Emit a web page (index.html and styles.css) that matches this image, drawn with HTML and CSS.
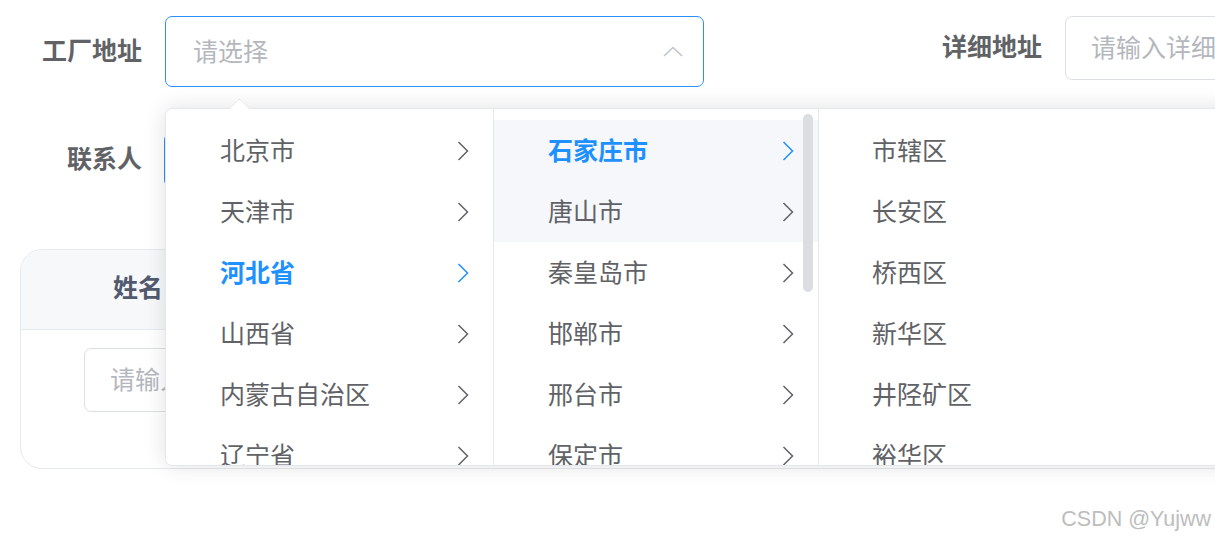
FILE: index.html
```html
<!doctype html>
<html lang="zh-CN">
<head>
  <meta charset="utf-8">
  <title>工厂信息</title>
  <link rel="stylesheet" href="styles.css">
</head>
<body>
  <div class="page">
    <div class="form-row row-1">
      <div class="form-item">
        <label class="form-label">工厂地址</label>
        <div class="select is-focus">
          <span class="placeholder">请选择</span>
          <svg class="select-arrow" width="20" height="11" viewBox="0 0 20 11"><path d="M1 10 L10 1.5 L19 10" fill="none" stroke="#c0c4cc" stroke-width="1.6"/></svg>
        </div>
      </div>
      <div class="form-item item-detail">
        <label class="form-label label-detail">详细地址</label>
        <div class="input input-detail"><span class="placeholder">请输入详细地址</span></div>
      </div>
    </div>

    <div class="form-row row-2">
      <div class="form-item">
        <label class="form-label">联系人</label>
        <div class="input input-contact is-focus"></div>
      </div>
    </div>

    <div class="table-card">
      <div class="table-head">
        <div class="th th-name">姓名</div>
        <div class="th"></div>
      </div>
      <div class="table-body">
        <div class="td td-name">
          <div class="input input-cell"><span class="placeholder">请输入姓名</span></div>
        </div>
      </div>
    </div>
  </div>

  <div class="cascader-popper">
    <div class="popper-arrow"></div>
    <div class="cascader-panel">
      <ul class="cascader-menu">
        <li class="node">北京市<svg class="node-arrow" width="12" height="20" viewBox="0 0 12 20"><path d="M1.5 1 L10.5 10 L1.5 19" fill="none" stroke="currentColor" stroke-width="1.5"/></svg></li>
        <li class="node">天津市<svg class="node-arrow" width="12" height="20" viewBox="0 0 12 20"><path d="M1.5 1 L10.5 10 L1.5 19" fill="none" stroke="currentColor" stroke-width="1.5"/></svg></li>
        <li class="node is-active">河北省<svg class="node-arrow" width="12" height="20" viewBox="0 0 12 20"><path d="M1.5 1 L10.5 10 L1.5 19" fill="none" stroke="currentColor" stroke-width="1.5"/></svg></li>
        <li class="node">山西省<svg class="node-arrow" width="12" height="20" viewBox="0 0 12 20"><path d="M1.5 1 L10.5 10 L1.5 19" fill="none" stroke="currentColor" stroke-width="1.5"/></svg></li>
        <li class="node">内蒙古自治区<svg class="node-arrow" width="12" height="20" viewBox="0 0 12 20"><path d="M1.5 1 L10.5 10 L1.5 19" fill="none" stroke="currentColor" stroke-width="1.5"/></svg></li>
        <li class="node">辽宁省<svg class="node-arrow" width="12" height="20" viewBox="0 0 12 20"><path d="M1.5 1 L10.5 10 L1.5 19" fill="none" stroke="currentColor" stroke-width="1.5"/></svg></li>
      </ul>
      <ul class="cascader-menu menu-scroll">
        <li class="node is-active is-bg">石家庄市<svg class="node-arrow" width="12" height="20" viewBox="0 0 12 20"><path d="M1.5 1 L10.5 10 L1.5 19" fill="none" stroke="currentColor" stroke-width="1.5"/></svg></li>
        <li class="node is-bg">唐山市<svg class="node-arrow" width="12" height="20" viewBox="0 0 12 20"><path d="M1.5 1 L10.5 10 L1.5 19" fill="none" stroke="currentColor" stroke-width="1.5"/></svg></li>
        <li class="node">秦皇岛市<svg class="node-arrow" width="12" height="20" viewBox="0 0 12 20"><path d="M1.5 1 L10.5 10 L1.5 19" fill="none" stroke="currentColor" stroke-width="1.5"/></svg></li>
        <li class="node">邯郸市<svg class="node-arrow" width="12" height="20" viewBox="0 0 12 20"><path d="M1.5 1 L10.5 10 L1.5 19" fill="none" stroke="currentColor" stroke-width="1.5"/></svg></li>
        <li class="node">邢台市<svg class="node-arrow" width="12" height="20" viewBox="0 0 12 20"><path d="M1.5 1 L10.5 10 L1.5 19" fill="none" stroke="currentColor" stroke-width="1.5"/></svg></li>
        <li class="node">保定市<svg class="node-arrow" width="12" height="20" viewBox="0 0 12 20"><path d="M1.5 1 L10.5 10 L1.5 19" fill="none" stroke="currentColor" stroke-width="1.5"/></svg></li>
        <div class="scrollbar"></div>
      </ul>
      <ul class="cascader-menu menu-last">
        <li class="node">市辖区</li>
        <li class="node">长安区</li>
        <li class="node">桥西区</li>
        <li class="node">新华区</li>
        <li class="node">井陉矿区</li>
        <li class="node">裕华区</li>
      </ul>
    </div>
  </div>

  <div class="watermark">CSDN @Yujww</div>
</body>
</html>
```

FILE: styles.css
```css
html, body {
  margin: 0;
  padding: 0;
  background: #fff;
}
body {
  position: relative;
  width: 1215px;
  height: 539px;
  overflow: hidden;
  font-family: "Noto Sans CJK SC", "Noto Sans", sans-serif;
  font-size: 25px;
  color: #606266;
}
.page {
  padding-top: 16px;
}
.form-row {
  display: flex;
  align-items: flex-start;
}
.form-item {
  display: flex;
  align-items: center;
}
.form-label {
  width: 142px;
  margin-right: 23px;
  padding-bottom: 6px;
  text-align: right;
  font-weight: bold;
  color: #606266;
  white-space: nowrap;
}
.item-detail {
  margin-left: 176px;
}
.label-detail {
  width: 162px;
}
.placeholder {
  color: #b4b7bd;
  white-space: nowrap;
  padding-bottom: 4px;
}
.select {
  box-sizing: border-box;
  width: 539px;
  height: 71px;
  border: 1px solid #dcdfe6;
  border-radius: 7px;
  padding: 0 20px 0 27px;
  display: flex;
  align-items: center;
  justify-content: space-between;
}
.is-focus {
  border-color: #2b90ff !important;
}
.input {
  box-sizing: border-box;
  border: 1px solid #dcdfe6;
  border-radius: 7px;
  padding: 0 25px;
  display: flex;
  align-items: center;
  overflow: hidden;
}
.input-detail {
  width: 400px;
  height: 64px;
}
.row-2 {
  margin-top: 46px;
}
.row-2 .form-label {
  margin-right: 22px;
}
.input-contact {
  width: 539px;
  height: 54px;
}
.table-card {
  margin: 62px 0 0 20px;
  width: 1300px;
  height: 220px;
  box-sizing: border-box;
  border: 1px solid #e6e9ef;
  border-radius: 22px;
  overflow: hidden;
}
.table-head {
  display: flex;
  height: 79px;
  background: #f7f8fa;
  border-bottom: 1px solid #e6e9ef;
}
.th {
  flex: 1;
  display: flex;
  align-items: center;
  justify-content: center;
  padding-bottom: 8px;
  font-weight: bold;
  color: #515a6e;
}
.th-name {
  flex: 0 0 234px;
}
.table-body {
  display: flex;
  padding-top: 18px;
}
.td-name {
  width: 234px;
}
.input-cell {
  margin-left: 63px;
  width: 140px;
  height: 64px;
}

/* cascader dropdown */
.cascader-popper {
  position: absolute;
  left: 165px;
  top: 108px;
  width: 1100px;
  height: 358px;
  box-sizing: border-box;
  background: #fff;
  border: 1px solid #e4e7ed;
  border-radius: 7px;
  box-shadow: 0 0 22px rgba(0, 0, 0, 0.12);
}
.popper-arrow {
  position: absolute;
  left: 66px;
  top: -8px;
  width: 14px;
  height: 14px;
  background: #fff;
  border-left: 1px solid #e4e7ed;
  border-top: 1px solid #e4e7ed;
  transform: rotate(45deg);
  border-top-left-radius: 2px;
}
.cascader-panel {
  position: relative;
  display: flex;
  height: 100%;
  overflow: hidden;
  border-radius: 7px;
}
.cascader-menu {
  position: relative;
  list-style: none;
  margin: 0;
  padding: 11px 0 0 0;
  width: 327px;
  flex: 0 0 327px;
  border-right: 1px solid #e4e7ed;
}
.menu-scroll {
  width: 324px;
  flex: 0 0 324px;
}
.menu-last {
  flex: 1;
  border-right: none;
}
.node {
  box-sizing: border-box;
  height: 61px;
  display: flex;
  align-items: center;
  justify-content: space-between;
  padding: 0 24px 4px 54px;
  white-space: nowrap;
}
.menu-last .node {
  padding-left: 53px;
}
.node-arrow {
  color: #606266;
  margin-top: 4px;
}
.node.is-active {
  color: #1e90ff;
  font-weight: bold;
}
.node.is-active .node-arrow {
  color: #1e90ff;
}
.is-bg {
  background: #f5f7fa;
}
.scrollbar {
  position: absolute;
  right: 5px;
  top: 5px;
  width: 10px;
  height: 178px;
  border-radius: 5px;
  background: #dcdde0;
}

.watermark {
  position: absolute;
  right: 4px;
  bottom: 7px;
  font-family: "Liberation Sans", Arial, sans-serif;
  font-size: 21.5px;
  color: #bdbdbd;
  text-shadow: 0 1px 1px #fff;
}
```
